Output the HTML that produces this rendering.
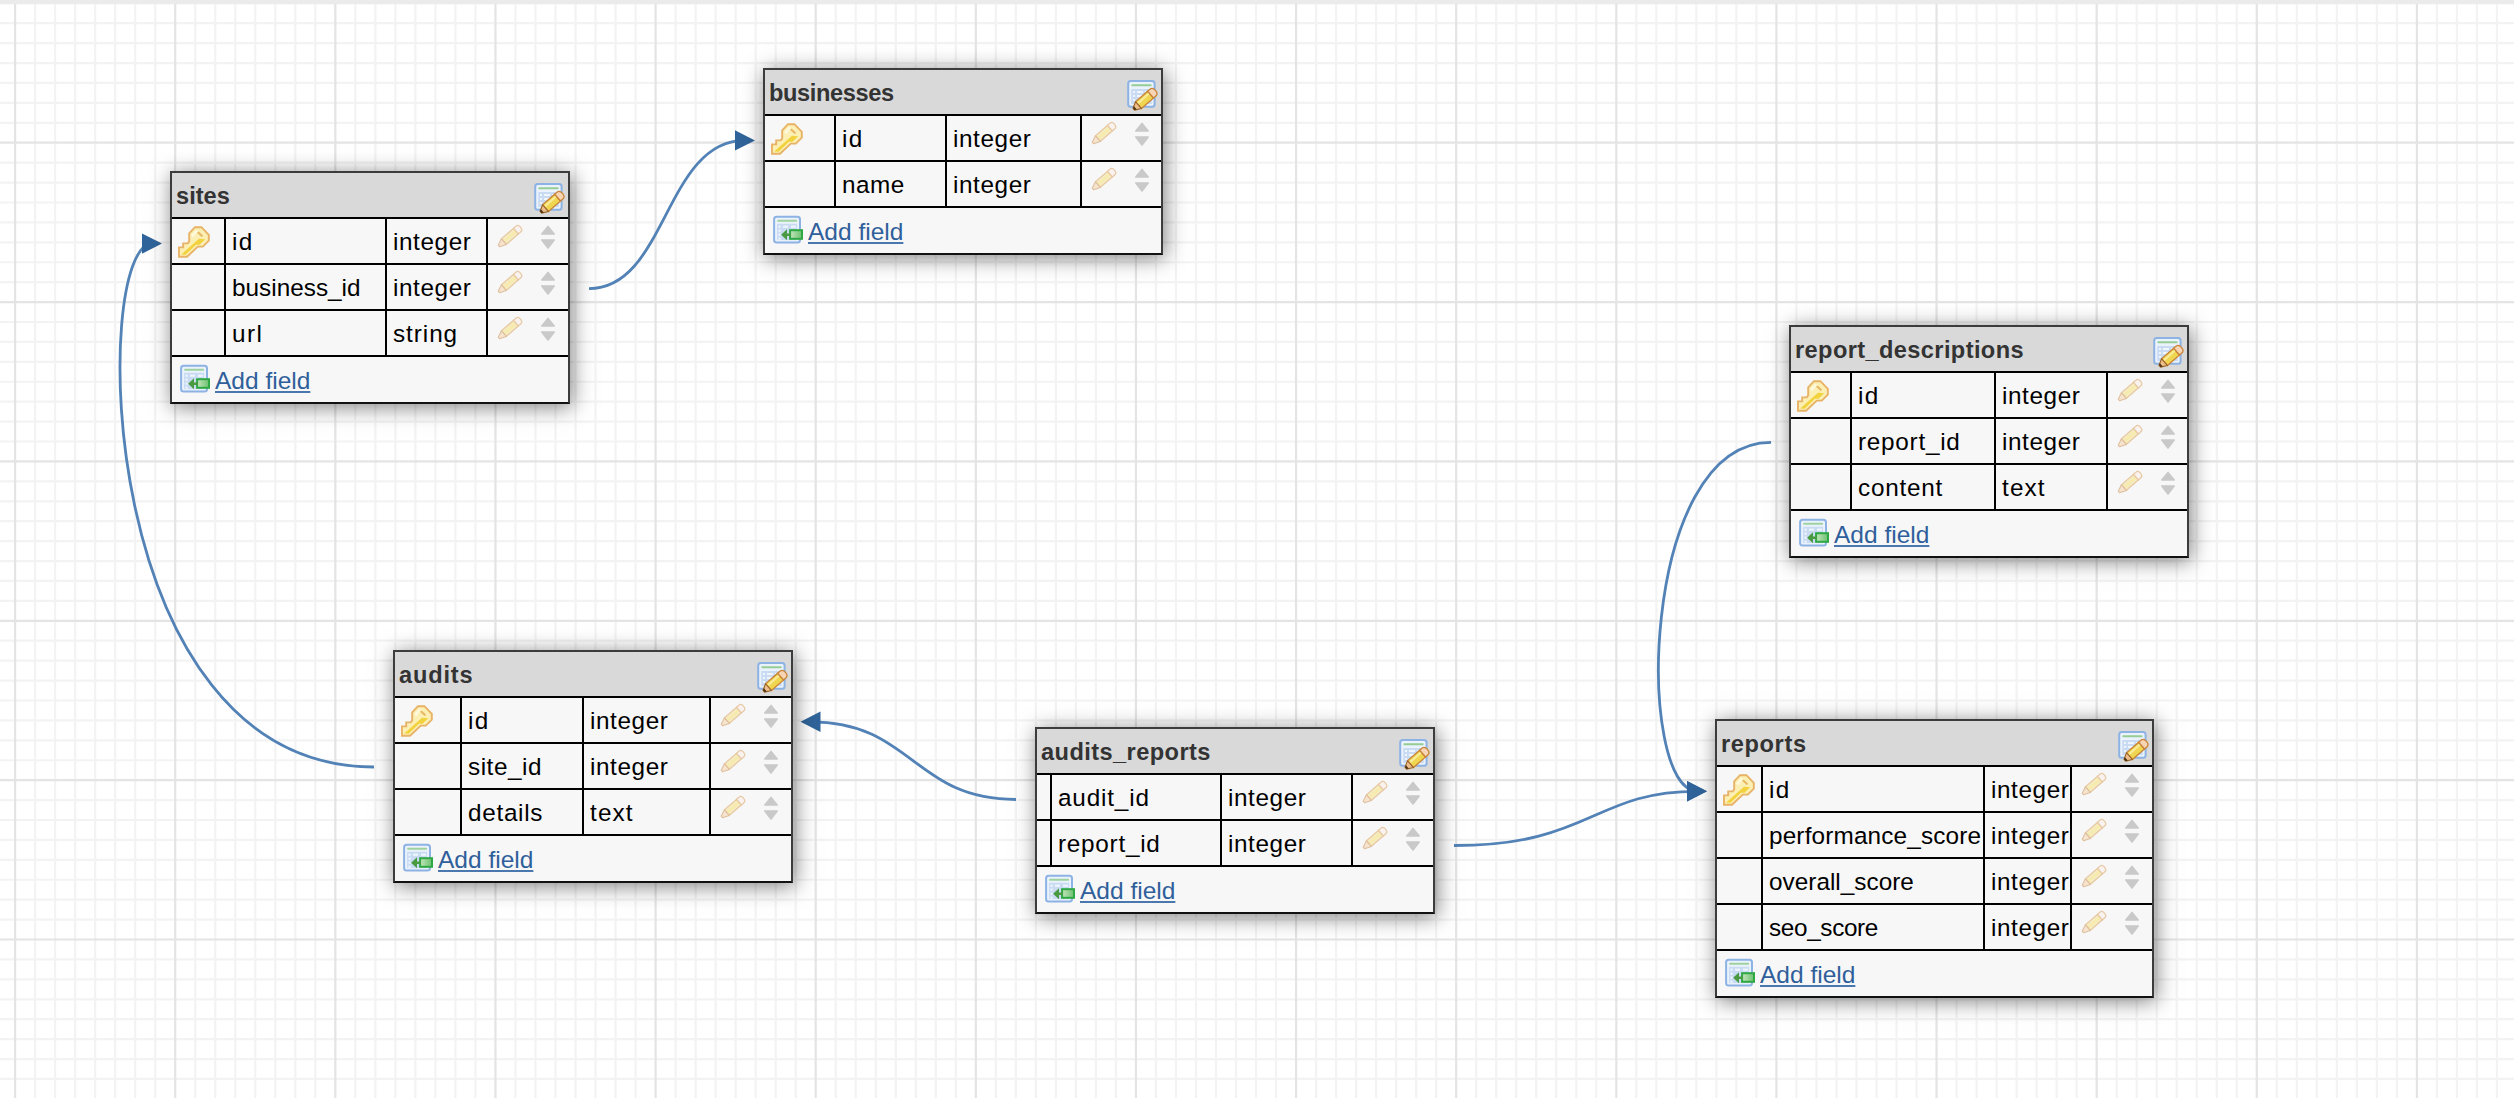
<!DOCTYPE html><html><head><meta charset="utf-8"><title>ER diagram</title><style>

html,body{margin:0;padding:0;width:2514px;height:1098px;overflow:hidden;background:#fff;font-family:"Liberation Sans", sans-serif;}
.grid,.rels{position:absolute;left:0;top:0;}
.topband{position:absolute;left:0;top:0;width:2514px;height:4px;background:#ebebeb;}
.tbl{position:absolute;box-sizing:border-box;border:2px solid #3c3c3c;border-bottom-color:#111;background:#f7f7f7;box-shadow:2px 3px 20px rgba(0,0,0,0.5);}
.hd{position:absolute;left:0;right:0;top:0;height:44px;background:#d9d9d9;border-bottom:2px solid #000;}
.title{position:absolute;left:4px;top:1px;line-height:44px;font-size:23.6px;font-weight:bold;color:#333;white-space:nowrap;}
.edit{position:absolute;right:2px;top:6px;}
.row{position:absolute;left:0;right:0;height:44px;}
.hl{position:absolute;left:0;right:0;height:2px;background:#000;}
.vl{position:absolute;width:2px;background:#000;}
.txt{position:absolute;top:1px;line-height:44px;font-size:24.3px;color:#000;white-space:nowrap;}
.key{position:absolute;left:6px;top:7px;}
.act{position:absolute;top:0;width:80px;height:44px;}
.pen{position:absolute;left:9px;top:5px;opacity:0.5;}
.ud{position:absolute;left:52px;top:5px;}
.ft{position:absolute;left:0;right:0;height:45px;}
.add{position:absolute;left:4px;top:4px;}
.link{position:absolute;left:43px;top:1px;line-height:45px;font-size:24.5px;color:#2f5f9b;text-decoration:underline;text-decoration-color:#4a78ae;text-decoration-thickness:1.5px;text-underline-offset:2px;white-space:nowrap;}

</style></head><body>
<svg class="grid" width="2514" height="1098" viewBox="0 0 2514 1098"><g stroke="#f3f3f3" stroke-width="2.2"><line x1="-4.92" y1="0" x2="-4.92" y2="1098"/><line x1="35.12" y1="0" x2="35.12" y2="1098"/><line x1="55.13" y1="0" x2="55.13" y2="1098"/><line x1="75.14" y1="0" x2="75.14" y2="1098"/><line x1="95.16" y1="0" x2="95.16" y2="1098"/><line x1="115.17" y1="0" x2="115.17" y2="1098"/><line x1="135.19" y1="0" x2="135.19" y2="1098"/><line x1="155.21" y1="0" x2="155.21" y2="1098"/><line x1="195.23" y1="0" x2="195.23" y2="1098"/><line x1="215.25" y1="0" x2="215.25" y2="1098"/><line x1="235.27" y1="0" x2="235.27" y2="1098"/><line x1="255.28" y1="0" x2="255.28" y2="1098"/><line x1="275.30" y1="0" x2="275.30" y2="1098"/><line x1="295.31" y1="0" x2="295.31" y2="1098"/><line x1="315.33" y1="0" x2="315.33" y2="1098"/><line x1="355.36" y1="0" x2="355.36" y2="1098"/><line x1="375.37" y1="0" x2="375.37" y2="1098"/><line x1="395.39" y1="0" x2="395.39" y2="1098"/><line x1="415.40" y1="0" x2="415.40" y2="1098"/><line x1="435.42" y1="0" x2="435.42" y2="1098"/><line x1="455.43" y1="0" x2="455.43" y2="1098"/><line x1="475.45" y1="0" x2="475.45" y2="1098"/><line x1="515.48" y1="0" x2="515.48" y2="1098"/><line x1="535.49" y1="0" x2="535.49" y2="1098"/><line x1="555.50" y1="0" x2="555.50" y2="1098"/><line x1="575.52" y1="0" x2="575.52" y2="1098"/><line x1="595.54" y1="0" x2="595.54" y2="1098"/><line x1="615.55" y1="0" x2="615.55" y2="1098"/><line x1="635.57" y1="0" x2="635.57" y2="1098"/><line x1="675.60" y1="0" x2="675.60" y2="1098"/><line x1="695.61" y1="0" x2="695.61" y2="1098"/><line x1="715.62" y1="0" x2="715.62" y2="1098"/><line x1="735.64" y1="0" x2="735.64" y2="1098"/><line x1="755.66" y1="0" x2="755.66" y2="1098"/><line x1="775.67" y1="0" x2="775.67" y2="1098"/><line x1="795.69" y1="0" x2="795.69" y2="1098"/><line x1="835.72" y1="0" x2="835.72" y2="1098"/><line x1="855.73" y1="0" x2="855.73" y2="1098"/><line x1="875.75" y1="0" x2="875.75" y2="1098"/><line x1="895.76" y1="0" x2="895.76" y2="1098"/><line x1="915.78" y1="0" x2="915.78" y2="1098"/><line x1="935.79" y1="0" x2="935.79" y2="1098"/><line x1="955.81" y1="0" x2="955.81" y2="1098"/><line x1="995.84" y1="0" x2="995.84" y2="1098"/><line x1="1015.85" y1="0" x2="1015.85" y2="1098"/><line x1="1035.87" y1="0" x2="1035.87" y2="1098"/><line x1="1055.88" y1="0" x2="1055.88" y2="1098"/><line x1="1075.89" y1="0" x2="1075.89" y2="1098"/><line x1="1095.91" y1="0" x2="1095.91" y2="1098"/><line x1="1115.92" y1="0" x2="1115.92" y2="1098"/><line x1="1155.95" y1="0" x2="1155.95" y2="1098"/><line x1="1175.97" y1="0" x2="1175.97" y2="1098"/><line x1="1195.98" y1="0" x2="1195.98" y2="1098"/><line x1="1216.00" y1="0" x2="1216.00" y2="1098"/><line x1="1236.01" y1="0" x2="1236.01" y2="1098"/><line x1="1256.03" y1="0" x2="1256.03" y2="1098"/><line x1="1276.04" y1="0" x2="1276.04" y2="1098"/><line x1="1316.08" y1="0" x2="1316.08" y2="1098"/><line x1="1336.09" y1="0" x2="1336.09" y2="1098"/><line x1="1356.11" y1="0" x2="1356.11" y2="1098"/><line x1="1376.12" y1="0" x2="1376.12" y2="1098"/><line x1="1396.13" y1="0" x2="1396.13" y2="1098"/><line x1="1416.15" y1="0" x2="1416.15" y2="1098"/><line x1="1436.16" y1="0" x2="1436.16" y2="1098"/><line x1="1476.19" y1="0" x2="1476.19" y2="1098"/><line x1="1496.21" y1="0" x2="1496.21" y2="1098"/><line x1="1516.22" y1="0" x2="1516.22" y2="1098"/><line x1="1536.24" y1="0" x2="1536.24" y2="1098"/><line x1="1556.25" y1="0" x2="1556.25" y2="1098"/><line x1="1576.27" y1="0" x2="1576.27" y2="1098"/><line x1="1596.28" y1="0" x2="1596.28" y2="1098"/><line x1="1636.32" y1="0" x2="1636.32" y2="1098"/><line x1="1656.33" y1="0" x2="1656.33" y2="1098"/><line x1="1676.35" y1="0" x2="1676.35" y2="1098"/><line x1="1696.36" y1="0" x2="1696.36" y2="1098"/><line x1="1716.38" y1="0" x2="1716.38" y2="1098"/><line x1="1736.39" y1="0" x2="1736.39" y2="1098"/><line x1="1756.40" y1="0" x2="1756.40" y2="1098"/><line x1="1796.43" y1="0" x2="1796.43" y2="1098"/><line x1="1816.45" y1="0" x2="1816.45" y2="1098"/><line x1="1836.46" y1="0" x2="1836.46" y2="1098"/><line x1="1856.48" y1="0" x2="1856.48" y2="1098"/><line x1="1876.49" y1="0" x2="1876.49" y2="1098"/><line x1="1896.51" y1="0" x2="1896.51" y2="1098"/><line x1="1916.52" y1="0" x2="1916.52" y2="1098"/><line x1="1956.56" y1="0" x2="1956.56" y2="1098"/><line x1="1976.57" y1="0" x2="1976.57" y2="1098"/><line x1="1996.59" y1="0" x2="1996.59" y2="1098"/><line x1="2016.60" y1="0" x2="2016.60" y2="1098"/><line x1="2036.62" y1="0" x2="2036.62" y2="1098"/><line x1="2056.63" y1="0" x2="2056.63" y2="1098"/><line x1="2076.64" y1="0" x2="2076.64" y2="1098"/><line x1="2116.68" y1="0" x2="2116.68" y2="1098"/><line x1="2136.69" y1="0" x2="2136.69" y2="1098"/><line x1="2156.70" y1="0" x2="2156.70" y2="1098"/><line x1="2176.72" y1="0" x2="2176.72" y2="1098"/><line x1="2196.74" y1="0" x2="2196.74" y2="1098"/><line x1="2216.75" y1="0" x2="2216.75" y2="1098"/><line x1="2236.76" y1="0" x2="2236.76" y2="1098"/><line x1="2276.80" y1="0" x2="2276.80" y2="1098"/><line x1="2296.81" y1="0" x2="2296.81" y2="1098"/><line x1="2316.82" y1="0" x2="2316.82" y2="1098"/><line x1="2336.84" y1="0" x2="2336.84" y2="1098"/><line x1="2356.86" y1="0" x2="2356.86" y2="1098"/><line x1="2376.87" y1="0" x2="2376.87" y2="1098"/><line x1="2396.88" y1="0" x2="2396.88" y2="1098"/><line x1="2436.91" y1="0" x2="2436.91" y2="1098"/><line x1="2456.93" y1="0" x2="2456.93" y2="1098"/><line x1="2476.95" y1="0" x2="2476.95" y2="1098"/><line x1="2496.96" y1="0" x2="2496.96" y2="1098"/><line x1="0" y1="3.28" x2="2514" y2="3.28"/><line x1="0" y1="23.20" x2="2514" y2="23.20"/><line x1="0" y1="43.12" x2="2514" y2="43.12"/><line x1="0" y1="63.04" x2="2514" y2="63.04"/><line x1="0" y1="82.96" x2="2514" y2="82.96"/><line x1="0" y1="102.88" x2="2514" y2="102.88"/><line x1="0" y1="122.80" x2="2514" y2="122.80"/><line x1="0" y1="162.64" x2="2514" y2="162.64"/><line x1="0" y1="182.56" x2="2514" y2="182.56"/><line x1="0" y1="202.48" x2="2514" y2="202.48"/><line x1="0" y1="222.40" x2="2514" y2="222.40"/><line x1="0" y1="242.32" x2="2514" y2="242.32"/><line x1="0" y1="262.24" x2="2514" y2="262.24"/><line x1="0" y1="282.16" x2="2514" y2="282.16"/><line x1="0" y1="322.00" x2="2514" y2="322.00"/><line x1="0" y1="341.92" x2="2514" y2="341.92"/><line x1="0" y1="361.84" x2="2514" y2="361.84"/><line x1="0" y1="381.76" x2="2514" y2="381.76"/><line x1="0" y1="401.68" x2="2514" y2="401.68"/><line x1="0" y1="421.60" x2="2514" y2="421.60"/><line x1="0" y1="441.52" x2="2514" y2="441.52"/><line x1="0" y1="481.36" x2="2514" y2="481.36"/><line x1="0" y1="501.28" x2="2514" y2="501.28"/><line x1="0" y1="521.20" x2="2514" y2="521.20"/><line x1="0" y1="541.12" x2="2514" y2="541.12"/><line x1="0" y1="561.04" x2="2514" y2="561.04"/><line x1="0" y1="580.96" x2="2514" y2="580.96"/><line x1="0" y1="600.88" x2="2514" y2="600.88"/><line x1="0" y1="640.72" x2="2514" y2="640.72"/><line x1="0" y1="660.64" x2="2514" y2="660.64"/><line x1="0" y1="680.56" x2="2514" y2="680.56"/><line x1="0" y1="700.48" x2="2514" y2="700.48"/><line x1="0" y1="720.40" x2="2514" y2="720.40"/><line x1="0" y1="740.32" x2="2514" y2="740.32"/><line x1="0" y1="760.24" x2="2514" y2="760.24"/><line x1="0" y1="800.08" x2="2514" y2="800.08"/><line x1="0" y1="820.00" x2="2514" y2="820.00"/><line x1="0" y1="839.92" x2="2514" y2="839.92"/><line x1="0" y1="859.84" x2="2514" y2="859.84"/><line x1="0" y1="879.76" x2="2514" y2="879.76"/><line x1="0" y1="899.68" x2="2514" y2="899.68"/><line x1="0" y1="919.60" x2="2514" y2="919.60"/><line x1="0" y1="959.44" x2="2514" y2="959.44"/><line x1="0" y1="979.36" x2="2514" y2="979.36"/><line x1="0" y1="999.28" x2="2514" y2="999.28"/><line x1="0" y1="1019.20" x2="2514" y2="1019.20"/><line x1="0" y1="1039.12" x2="2514" y2="1039.12"/><line x1="0" y1="1059.04" x2="2514" y2="1059.04"/><line x1="0" y1="1078.96" x2="2514" y2="1078.96"/></g><g stroke="#e4e4e4" stroke-width="2.2"><line x1="15.10" y1="0" x2="15.10" y2="1098"/><line x1="175.22" y1="0" x2="175.22" y2="1098"/><line x1="335.34" y1="0" x2="335.34" y2="1098"/><line x1="495.46" y1="0" x2="495.46" y2="1098"/><line x1="655.58" y1="0" x2="655.58" y2="1098"/><line x1="815.70" y1="0" x2="815.70" y2="1098"/><line x1="975.82" y1="0" x2="975.82" y2="1098"/><line x1="1135.94" y1="0" x2="1135.94" y2="1098"/><line x1="1296.06" y1="0" x2="1296.06" y2="1098"/><line x1="1456.18" y1="0" x2="1456.18" y2="1098"/><line x1="1616.30" y1="0" x2="1616.30" y2="1098"/><line x1="1776.42" y1="0" x2="1776.42" y2="1098"/><line x1="1936.54" y1="0" x2="1936.54" y2="1098"/><line x1="2096.66" y1="0" x2="2096.66" y2="1098"/><line x1="2256.78" y1="0" x2="2256.78" y2="1098"/><line x1="2416.90" y1="0" x2="2416.90" y2="1098"/><line x1="0" y1="-16.64" x2="2514" y2="-16.64"/><line x1="0" y1="142.72" x2="2514" y2="142.72"/><line x1="0" y1="302.08" x2="2514" y2="302.08"/><line x1="0" y1="461.44" x2="2514" y2="461.44"/><line x1="0" y1="620.80" x2="2514" y2="620.80"/><line x1="0" y1="780.16" x2="2514" y2="780.16"/><line x1="0" y1="939.52" x2="2514" y2="939.52"/></g></svg>
<div class="topband"></div>
<svg class="rels" width="2514" height="1098" viewBox="0 0 2514 1098"><path d="M589 288.6 C666.8 288.6 664.7 140.4 745 140.4" fill="none" stroke="#5282b6" stroke-width="2.8"/><path d="M755 140.4 L735 130.20000000000002 L735 150.6 Z" fill="#30649a"/><path d="M374 767 C91.8 767 91.8 243.6 152 243.6" fill="none" stroke="#5282b6" stroke-width="2.8"/><path d="M162 243.6 L142 233.4 L142 253.79999999999998 Z" fill="#30649a"/><path d="M1016 799.5 C913 799.5 913 721.8 810.5 721.8" fill="none" stroke="#5282b6" stroke-width="2.8"/><path d="M800.5 721.8 L820.5 711.5999999999999 L820.5 732.0 Z" fill="#30649a"/><path d="M1454 845.5 C1591 845.5 1593.6 791.3 1697 791.3" fill="none" stroke="#5282b6" stroke-width="2.8"/><path d="M1707 791.3 L1687 781.0999999999999 L1687 801.5 Z" fill="#30649a"/><path d="M1771 442.3 C1638.5 442.3 1636 791 1697 791" fill="none" stroke="#5282b6" stroke-width="2.8"/><path d="M1707 791.3 L1687 781.0999999999999 L1687 801.5 Z" fill="#30649a"/></svg>
<div class="tbl" style="left:763px;top:68px;width:400px;height:187px">
<div class="hd"><span class="title" style="letter-spacing:-0.38px">businesses</span><svg class="edit" width="36" height="38" viewBox="0 0 36 38"><rect x="5.2" y="5.1" width="26.4" height="25.7" rx="2.5" fill="#eaf2fc" stroke="#8db2e4" stroke-width="2"/><rect x="8.3" y="8.2" width="20.4" height="2" rx="1" fill="#96cd94"/><rect x="8.3" y="13" width="20.4" height="15" fill="#c8dbf3"/><g fill="#eef5fd"><rect x="10" y="15" width="2" height="2"/><rect x="10" y="19" width="2" height="2"/><rect x="10" y="23" width="2" height="2"/><rect x="14" y="15" width="6" height="2"/><rect x="14" y="19" width="6" height="2"/><rect x="22" y="15" width="5" height="2"/></g><g transform="translate(10.6 33.4) rotate(-41)"><path d="M6.5 -4.5 L22.5 -4.5 L22.5 4.5 L6.5 4.5 Z" fill="#f0d650" stroke="#c98438" stroke-width="1.3"/><path d="M7.5 -2.8 L22 -2.8 L22 -0.8 L7.5 -0.8 Z" fill="#f8ec9c"/><path d="M22.5 -4.5 L25.5 -4.5 Q29 -4.5 29 0 Q29 4.5 25.5 4.5 L22.5 4.5 Z" fill="#f6d4b4" stroke="#c98438" stroke-width="1.3"/><path d="M6.5 -4.5 L0.3 -1.2 L0.3 1.2 L6.5 4.5 Z" fill="#ecbe8c" stroke="#9a6428" stroke-width="1.1" stroke-linejoin="round"/><path d="M0.3 -1.2 L2.3 -2.2 L2.3 2.2 L0.3 1.2 Z" fill="#4a3010"/></g></svg></div>
<div class="row" style="top:46px">
<svg class="key" width="32" height="32" viewBox="0 0 16 16"><path d="M0.5 10.7 L2.6 10.7 L2.6 8.7 L4.9 8.7 L5.6 7.7 L5.6 3.7 L8.5 0.6 L11.7 0.6 L15.4 4.4 L15.4 7.3 L12.4 10.3 L9.9 10.3 L4.5 15.4 L0.5 15.4 Z" fill="#fbefb4" stroke="#e8b366" stroke-width="0.95" stroke-linejoin="miter"/><path d="M1.6 14.2 L10.5 6.4 L13.6 6.6 L10.8 9.4 L9 9.4 L3.8 14.4 Z" fill="#f2d23e"/><path d="M6.6 4.6 L8.9 2 L10.2 2.2 L7.6 5.8 Z" fill="#fffbe6" opacity="0.8"/><path d="M10.2 3.4 L11.9 4.9" stroke="#e8b868" stroke-width="1.1" stroke-linecap="round"/></svg>
<span class="txt" style="left:77px;letter-spacing:1.4px">id</span>
<span class="txt" style="left:188px;letter-spacing:0.6px">integer</span>
<span class="act" style="left:317px"><svg class="pen" width="28" height="28" viewBox="0 0 28 28"><g transform="translate(1.6 22.2) rotate(-41)"><path d="M7 -3.7 L23 -3.7 L23 3.7 L7 3.7 Z" fill="#f4e08a" stroke="#d89a50" stroke-width="1.2"/><path d="M8 -0.9 L22 -0.9 L22 1.2 L8 1.2 Z" fill="#f7e060"/><path d="M23 -3.7 L26.3 -3.7 Q29 -3.7 29 0 Q29 3.7 26.3 3.7 L23 3.7 Z" fill="#fdeee6" stroke="#d89a50" stroke-width="1.2"/><path d="M7 -3.7 L0.4 -1 L0.4 1 L7 3.7 Z" fill="#f6d2a8" stroke="#c88a48" stroke-width="1.1" stroke-linejoin="round"/></g></svg><svg class="ud" width="16" height="26" viewBox="0 0 16 26"><path d="M8 2.4 L14.2 10 L1.8 10 Z" fill="#c9c9c9" stroke="#c9c9c9" stroke-width="1.6" stroke-linejoin="round"/><path d="M1.8 16 L14.2 16 L8 24 Z" fill="#c9c9c9" stroke="#c9c9c9" stroke-width="1.6" stroke-linejoin="round"/></svg></span>
</div>
<div class="hl" style="top:90px"></div>
<div class="row" style="top:92px">
<span class="txt" style="left:77px;letter-spacing:0.47px">name</span>
<span class="txt" style="left:188px;letter-spacing:0.6px">integer</span>
<span class="act" style="left:317px"><svg class="pen" width="28" height="28" viewBox="0 0 28 28"><g transform="translate(1.6 22.2) rotate(-41)"><path d="M7 -3.7 L23 -3.7 L23 3.7 L7 3.7 Z" fill="#f4e08a" stroke="#d89a50" stroke-width="1.2"/><path d="M8 -0.9 L22 -0.9 L22 1.2 L8 1.2 Z" fill="#f7e060"/><path d="M23 -3.7 L26.3 -3.7 Q29 -3.7 29 0 Q29 3.7 26.3 3.7 L23 3.7 Z" fill="#fdeee6" stroke="#d89a50" stroke-width="1.2"/><path d="M7 -3.7 L0.4 -1 L0.4 1 L7 3.7 Z" fill="#f6d2a8" stroke="#c88a48" stroke-width="1.1" stroke-linejoin="round"/></g></svg><svg class="ud" width="16" height="26" viewBox="0 0 16 26"><path d="M8 2.4 L14.2 10 L1.8 10 Z" fill="#c9c9c9" stroke="#c9c9c9" stroke-width="1.6" stroke-linejoin="round"/><path d="M1.8 16 L14.2 16 L8 24 Z" fill="#c9c9c9" stroke="#c9c9c9" stroke-width="1.6" stroke-linejoin="round"/></svg></span>
</div>
<div class="hl" style="top:136px"></div>
<div class="vl" style="left:69px;top:46px;height:92px"></div>
<div class="vl" style="left:180px;top:46px;height:92px"></div>
<div class="vl" style="left:315px;top:46px;height:92px"></div>
<div class="ft" style="top:138px"><svg class="add" width="36" height="36" viewBox="0 0 36 36"><rect x="5.1" y="4.7" width="25.9" height="25.7" rx="2.5" fill="#eaf2fc" stroke="#8db2e4" stroke-width="2"/><rect x="8.1" y="7.7" width="20" height="2" rx="1" fill="#9fd29e"/><rect x="8.1" y="11.8" width="20" height="16.3" fill="#c8dbf3"/><g fill="#eef5fd"><rect x="9.5" y="13.6" width="2.2" height="2.2"/><rect x="9.5" y="17.6" width="2.2" height="2.2"/><rect x="9.5" y="21.6" width="2.2" height="2.2"/><rect x="9.5" y="25.6" width="2.2" height="2.2"/><rect x="14" y="13.6" width="5" height="2.2"/><rect x="22" y="13.6" width="5" height="2.2"/></g><defs><linearGradient id="ag" x1="0" y1="0" x2="1" y2="0"><stop offset="0" stop-color="#c4e6bc"/><stop offset="1" stop-color="#6cc070"/></linearGradient></defs><rect x="21.1" y="18.2" width="11.9" height="8.6" fill="url(#ag)" stroke="#2ea843" stroke-width="2"/><path d="M12.1 22.7 L18 17.2 L18 21.4 L22 21.4 L22 24.1 L18 24.1 L18 28.2 Z" fill="#4a9a42"/></svg><span class="link">Add field</span></div>
</div>
<div class="tbl" style="left:170px;top:171px;width:400px;height:233px">
<div class="hd"><span class="title" style="letter-spacing:0.02px">sites</span><svg class="edit" width="36" height="38" viewBox="0 0 36 38"><rect x="5.2" y="5.1" width="26.4" height="25.7" rx="2.5" fill="#eaf2fc" stroke="#8db2e4" stroke-width="2"/><rect x="8.3" y="8.2" width="20.4" height="2" rx="1" fill="#96cd94"/><rect x="8.3" y="13" width="20.4" height="15" fill="#c8dbf3"/><g fill="#eef5fd"><rect x="10" y="15" width="2" height="2"/><rect x="10" y="19" width="2" height="2"/><rect x="10" y="23" width="2" height="2"/><rect x="14" y="15" width="6" height="2"/><rect x="14" y="19" width="6" height="2"/><rect x="22" y="15" width="5" height="2"/></g><g transform="translate(10.6 33.4) rotate(-41)"><path d="M6.5 -4.5 L22.5 -4.5 L22.5 4.5 L6.5 4.5 Z" fill="#f0d650" stroke="#c98438" stroke-width="1.3"/><path d="M7.5 -2.8 L22 -2.8 L22 -0.8 L7.5 -0.8 Z" fill="#f8ec9c"/><path d="M22.5 -4.5 L25.5 -4.5 Q29 -4.5 29 0 Q29 4.5 25.5 4.5 L22.5 4.5 Z" fill="#f6d4b4" stroke="#c98438" stroke-width="1.3"/><path d="M6.5 -4.5 L0.3 -1.2 L0.3 1.2 L6.5 4.5 Z" fill="#ecbe8c" stroke="#9a6428" stroke-width="1.1" stroke-linejoin="round"/><path d="M0.3 -1.2 L2.3 -2.2 L2.3 2.2 L0.3 1.2 Z" fill="#4a3010"/></g></svg></div>
<div class="row" style="top:46px">
<svg class="key" width="32" height="32" viewBox="0 0 16 16"><path d="M0.5 10.7 L2.6 10.7 L2.6 8.7 L4.9 8.7 L5.6 7.7 L5.6 3.7 L8.5 0.6 L11.7 0.6 L15.4 4.4 L15.4 7.3 L12.4 10.3 L9.9 10.3 L4.5 15.4 L0.5 15.4 Z" fill="#fbefb4" stroke="#e8b366" stroke-width="0.95" stroke-linejoin="miter"/><path d="M1.6 14.2 L10.5 6.4 L13.6 6.6 L10.8 9.4 L9 9.4 L3.8 14.4 Z" fill="#f2d23e"/><path d="M6.6 4.6 L8.9 2 L10.2 2.2 L7.6 5.8 Z" fill="#fffbe6" opacity="0.8"/><path d="M10.2 3.4 L11.9 4.9" stroke="#e8b868" stroke-width="1.1" stroke-linecap="round"/></svg>
<span class="txt" style="left:60px;letter-spacing:1.4px">id</span>
<span class="txt" style="left:221px;letter-spacing:0.6px">integer</span>
<span class="act" style="left:316px"><svg class="pen" width="28" height="28" viewBox="0 0 28 28"><g transform="translate(1.6 22.2) rotate(-41)"><path d="M7 -3.7 L23 -3.7 L23 3.7 L7 3.7 Z" fill="#f4e08a" stroke="#d89a50" stroke-width="1.2"/><path d="M8 -0.9 L22 -0.9 L22 1.2 L8 1.2 Z" fill="#f7e060"/><path d="M23 -3.7 L26.3 -3.7 Q29 -3.7 29 0 Q29 3.7 26.3 3.7 L23 3.7 Z" fill="#fdeee6" stroke="#d89a50" stroke-width="1.2"/><path d="M7 -3.7 L0.4 -1 L0.4 1 L7 3.7 Z" fill="#f6d2a8" stroke="#c88a48" stroke-width="1.1" stroke-linejoin="round"/></g></svg><svg class="ud" width="16" height="26" viewBox="0 0 16 26"><path d="M8 2.4 L14.2 10 L1.8 10 Z" fill="#c9c9c9" stroke="#c9c9c9" stroke-width="1.6" stroke-linejoin="round"/><path d="M1.8 16 L14.2 16 L8 24 Z" fill="#c9c9c9" stroke="#c9c9c9" stroke-width="1.6" stroke-linejoin="round"/></svg></span>
</div>
<div class="hl" style="top:90px"></div>
<div class="row" style="top:92px">
<span class="txt" style="left:60px;letter-spacing:0.02px">business_id</span>
<span class="txt" style="left:221px;letter-spacing:0.6px">integer</span>
<span class="act" style="left:316px"><svg class="pen" width="28" height="28" viewBox="0 0 28 28"><g transform="translate(1.6 22.2) rotate(-41)"><path d="M7 -3.7 L23 -3.7 L23 3.7 L7 3.7 Z" fill="#f4e08a" stroke="#d89a50" stroke-width="1.2"/><path d="M8 -0.9 L22 -0.9 L22 1.2 L8 1.2 Z" fill="#f7e060"/><path d="M23 -3.7 L26.3 -3.7 Q29 -3.7 29 0 Q29 3.7 26.3 3.7 L23 3.7 Z" fill="#fdeee6" stroke="#d89a50" stroke-width="1.2"/><path d="M7 -3.7 L0.4 -1 L0.4 1 L7 3.7 Z" fill="#f6d2a8" stroke="#c88a48" stroke-width="1.1" stroke-linejoin="round"/></g></svg><svg class="ud" width="16" height="26" viewBox="0 0 16 26"><path d="M8 2.4 L14.2 10 L1.8 10 Z" fill="#c9c9c9" stroke="#c9c9c9" stroke-width="1.6" stroke-linejoin="round"/><path d="M1.8 16 L14.2 16 L8 24 Z" fill="#c9c9c9" stroke="#c9c9c9" stroke-width="1.6" stroke-linejoin="round"/></svg></span>
</div>
<div class="hl" style="top:136px"></div>
<div class="row" style="top:138px">
<span class="txt" style="left:60px;letter-spacing:1.45px">url</span>
<span class="txt" style="left:221px;letter-spacing:0.94px">string</span>
<span class="act" style="left:316px"><svg class="pen" width="28" height="28" viewBox="0 0 28 28"><g transform="translate(1.6 22.2) rotate(-41)"><path d="M7 -3.7 L23 -3.7 L23 3.7 L7 3.7 Z" fill="#f4e08a" stroke="#d89a50" stroke-width="1.2"/><path d="M8 -0.9 L22 -0.9 L22 1.2 L8 1.2 Z" fill="#f7e060"/><path d="M23 -3.7 L26.3 -3.7 Q29 -3.7 29 0 Q29 3.7 26.3 3.7 L23 3.7 Z" fill="#fdeee6" stroke="#d89a50" stroke-width="1.2"/><path d="M7 -3.7 L0.4 -1 L0.4 1 L7 3.7 Z" fill="#f6d2a8" stroke="#c88a48" stroke-width="1.1" stroke-linejoin="round"/></g></svg><svg class="ud" width="16" height="26" viewBox="0 0 16 26"><path d="M8 2.4 L14.2 10 L1.8 10 Z" fill="#c9c9c9" stroke="#c9c9c9" stroke-width="1.6" stroke-linejoin="round"/><path d="M1.8 16 L14.2 16 L8 24 Z" fill="#c9c9c9" stroke="#c9c9c9" stroke-width="1.6" stroke-linejoin="round"/></svg></span>
</div>
<div class="hl" style="top:182px"></div>
<div class="vl" style="left:52px;top:46px;height:138px"></div>
<div class="vl" style="left:213px;top:46px;height:138px"></div>
<div class="vl" style="left:314px;top:46px;height:138px"></div>
<div class="ft" style="top:184px"><svg class="add" width="36" height="36" viewBox="0 0 36 36"><rect x="5.1" y="4.7" width="25.9" height="25.7" rx="2.5" fill="#eaf2fc" stroke="#8db2e4" stroke-width="2"/><rect x="8.1" y="7.7" width="20" height="2" rx="1" fill="#9fd29e"/><rect x="8.1" y="11.8" width="20" height="16.3" fill="#c8dbf3"/><g fill="#eef5fd"><rect x="9.5" y="13.6" width="2.2" height="2.2"/><rect x="9.5" y="17.6" width="2.2" height="2.2"/><rect x="9.5" y="21.6" width="2.2" height="2.2"/><rect x="9.5" y="25.6" width="2.2" height="2.2"/><rect x="14" y="13.6" width="5" height="2.2"/><rect x="22" y="13.6" width="5" height="2.2"/></g><defs><linearGradient id="ag" x1="0" y1="0" x2="1" y2="0"><stop offset="0" stop-color="#c4e6bc"/><stop offset="1" stop-color="#6cc070"/></linearGradient></defs><rect x="21.1" y="18.2" width="11.9" height="8.6" fill="url(#ag)" stroke="#2ea843" stroke-width="2"/><path d="M12.1 22.7 L18 17.2 L18 21.4 L22 21.4 L22 24.1 L18 24.1 L18 28.2 Z" fill="#4a9a42"/></svg><span class="link">Add field</span></div>
</div>
<div class="tbl" style="left:1789px;top:325px;width:400px;height:233px">
<div class="hd"><span class="title" style="letter-spacing:0.39px">report_descriptions</span><svg class="edit" width="36" height="38" viewBox="0 0 36 38"><rect x="5.2" y="5.1" width="26.4" height="25.7" rx="2.5" fill="#eaf2fc" stroke="#8db2e4" stroke-width="2"/><rect x="8.3" y="8.2" width="20.4" height="2" rx="1" fill="#96cd94"/><rect x="8.3" y="13" width="20.4" height="15" fill="#c8dbf3"/><g fill="#eef5fd"><rect x="10" y="15" width="2" height="2"/><rect x="10" y="19" width="2" height="2"/><rect x="10" y="23" width="2" height="2"/><rect x="14" y="15" width="6" height="2"/><rect x="14" y="19" width="6" height="2"/><rect x="22" y="15" width="5" height="2"/></g><g transform="translate(10.6 33.4) rotate(-41)"><path d="M6.5 -4.5 L22.5 -4.5 L22.5 4.5 L6.5 4.5 Z" fill="#f0d650" stroke="#c98438" stroke-width="1.3"/><path d="M7.5 -2.8 L22 -2.8 L22 -0.8 L7.5 -0.8 Z" fill="#f8ec9c"/><path d="M22.5 -4.5 L25.5 -4.5 Q29 -4.5 29 0 Q29 4.5 25.5 4.5 L22.5 4.5 Z" fill="#f6d4b4" stroke="#c98438" stroke-width="1.3"/><path d="M6.5 -4.5 L0.3 -1.2 L0.3 1.2 L6.5 4.5 Z" fill="#ecbe8c" stroke="#9a6428" stroke-width="1.1" stroke-linejoin="round"/><path d="M0.3 -1.2 L2.3 -2.2 L2.3 2.2 L0.3 1.2 Z" fill="#4a3010"/></g></svg></div>
<div class="row" style="top:46px">
<svg class="key" width="32" height="32" viewBox="0 0 16 16"><path d="M0.5 10.7 L2.6 10.7 L2.6 8.7 L4.9 8.7 L5.6 7.7 L5.6 3.7 L8.5 0.6 L11.7 0.6 L15.4 4.4 L15.4 7.3 L12.4 10.3 L9.9 10.3 L4.5 15.4 L0.5 15.4 Z" fill="#fbefb4" stroke="#e8b366" stroke-width="0.95" stroke-linejoin="miter"/><path d="M1.6 14.2 L10.5 6.4 L13.6 6.6 L10.8 9.4 L9 9.4 L3.8 14.4 Z" fill="#f2d23e"/><path d="M6.6 4.6 L8.9 2 L10.2 2.2 L7.6 5.8 Z" fill="#fffbe6" opacity="0.8"/><path d="M10.2 3.4 L11.9 4.9" stroke="#e8b868" stroke-width="1.1" stroke-linecap="round"/></svg>
<span class="txt" style="left:67px;letter-spacing:1.4px">id</span>
<span class="txt" style="left:211px;letter-spacing:0.6px">integer</span>
<span class="act" style="left:317px"><svg class="pen" width="28" height="28" viewBox="0 0 28 28"><g transform="translate(1.6 22.2) rotate(-41)"><path d="M7 -3.7 L23 -3.7 L23 3.7 L7 3.7 Z" fill="#f4e08a" stroke="#d89a50" stroke-width="1.2"/><path d="M8 -0.9 L22 -0.9 L22 1.2 L8 1.2 Z" fill="#f7e060"/><path d="M23 -3.7 L26.3 -3.7 Q29 -3.7 29 0 Q29 3.7 26.3 3.7 L23 3.7 Z" fill="#fdeee6" stroke="#d89a50" stroke-width="1.2"/><path d="M7 -3.7 L0.4 -1 L0.4 1 L7 3.7 Z" fill="#f6d2a8" stroke="#c88a48" stroke-width="1.1" stroke-linejoin="round"/></g></svg><svg class="ud" width="16" height="26" viewBox="0 0 16 26"><path d="M8 2.4 L14.2 10 L1.8 10 Z" fill="#c9c9c9" stroke="#c9c9c9" stroke-width="1.6" stroke-linejoin="round"/><path d="M1.8 16 L14.2 16 L8 24 Z" fill="#c9c9c9" stroke="#c9c9c9" stroke-width="1.6" stroke-linejoin="round"/></svg></span>
</div>
<div class="hl" style="top:90px"></div>
<div class="row" style="top:92px">
<span class="txt" style="left:67px;letter-spacing:0.74px">report_id</span>
<span class="txt" style="left:211px;letter-spacing:0.6px">integer</span>
<span class="act" style="left:317px"><svg class="pen" width="28" height="28" viewBox="0 0 28 28"><g transform="translate(1.6 22.2) rotate(-41)"><path d="M7 -3.7 L23 -3.7 L23 3.7 L7 3.7 Z" fill="#f4e08a" stroke="#d89a50" stroke-width="1.2"/><path d="M8 -0.9 L22 -0.9 L22 1.2 L8 1.2 Z" fill="#f7e060"/><path d="M23 -3.7 L26.3 -3.7 Q29 -3.7 29 0 Q29 3.7 26.3 3.7 L23 3.7 Z" fill="#fdeee6" stroke="#d89a50" stroke-width="1.2"/><path d="M7 -3.7 L0.4 -1 L0.4 1 L7 3.7 Z" fill="#f6d2a8" stroke="#c88a48" stroke-width="1.1" stroke-linejoin="round"/></g></svg><svg class="ud" width="16" height="26" viewBox="0 0 16 26"><path d="M8 2.4 L14.2 10 L1.8 10 Z" fill="#c9c9c9" stroke="#c9c9c9" stroke-width="1.6" stroke-linejoin="round"/><path d="M1.8 16 L14.2 16 L8 24 Z" fill="#c9c9c9" stroke="#c9c9c9" stroke-width="1.6" stroke-linejoin="round"/></svg></span>
</div>
<div class="hl" style="top:136px"></div>
<div class="row" style="top:138px">
<span class="txt" style="left:67px;letter-spacing:0.77px">content</span>
<span class="txt" style="left:211px;letter-spacing:1.13px">text</span>
<span class="act" style="left:317px"><svg class="pen" width="28" height="28" viewBox="0 0 28 28"><g transform="translate(1.6 22.2) rotate(-41)"><path d="M7 -3.7 L23 -3.7 L23 3.7 L7 3.7 Z" fill="#f4e08a" stroke="#d89a50" stroke-width="1.2"/><path d="M8 -0.9 L22 -0.9 L22 1.2 L8 1.2 Z" fill="#f7e060"/><path d="M23 -3.7 L26.3 -3.7 Q29 -3.7 29 0 Q29 3.7 26.3 3.7 L23 3.7 Z" fill="#fdeee6" stroke="#d89a50" stroke-width="1.2"/><path d="M7 -3.7 L0.4 -1 L0.4 1 L7 3.7 Z" fill="#f6d2a8" stroke="#c88a48" stroke-width="1.1" stroke-linejoin="round"/></g></svg><svg class="ud" width="16" height="26" viewBox="0 0 16 26"><path d="M8 2.4 L14.2 10 L1.8 10 Z" fill="#c9c9c9" stroke="#c9c9c9" stroke-width="1.6" stroke-linejoin="round"/><path d="M1.8 16 L14.2 16 L8 24 Z" fill="#c9c9c9" stroke="#c9c9c9" stroke-width="1.6" stroke-linejoin="round"/></svg></span>
</div>
<div class="hl" style="top:182px"></div>
<div class="vl" style="left:59px;top:46px;height:138px"></div>
<div class="vl" style="left:203px;top:46px;height:138px"></div>
<div class="vl" style="left:315px;top:46px;height:138px"></div>
<div class="ft" style="top:184px"><svg class="add" width="36" height="36" viewBox="0 0 36 36"><rect x="5.1" y="4.7" width="25.9" height="25.7" rx="2.5" fill="#eaf2fc" stroke="#8db2e4" stroke-width="2"/><rect x="8.1" y="7.7" width="20" height="2" rx="1" fill="#9fd29e"/><rect x="8.1" y="11.8" width="20" height="16.3" fill="#c8dbf3"/><g fill="#eef5fd"><rect x="9.5" y="13.6" width="2.2" height="2.2"/><rect x="9.5" y="17.6" width="2.2" height="2.2"/><rect x="9.5" y="21.6" width="2.2" height="2.2"/><rect x="9.5" y="25.6" width="2.2" height="2.2"/><rect x="14" y="13.6" width="5" height="2.2"/><rect x="22" y="13.6" width="5" height="2.2"/></g><defs><linearGradient id="ag" x1="0" y1="0" x2="1" y2="0"><stop offset="0" stop-color="#c4e6bc"/><stop offset="1" stop-color="#6cc070"/></linearGradient></defs><rect x="21.1" y="18.2" width="11.9" height="8.6" fill="url(#ag)" stroke="#2ea843" stroke-width="2"/><path d="M12.1 22.7 L18 17.2 L18 21.4 L22 21.4 L22 24.1 L18 24.1 L18 28.2 Z" fill="#4a9a42"/></svg><span class="link">Add field</span></div>
</div>
<div class="tbl" style="left:393px;top:650px;width:400px;height:233px">
<div class="hd"><span class="title" style="letter-spacing:0.84px">audits</span><svg class="edit" width="36" height="38" viewBox="0 0 36 38"><rect x="5.2" y="5.1" width="26.4" height="25.7" rx="2.5" fill="#eaf2fc" stroke="#8db2e4" stroke-width="2"/><rect x="8.3" y="8.2" width="20.4" height="2" rx="1" fill="#96cd94"/><rect x="8.3" y="13" width="20.4" height="15" fill="#c8dbf3"/><g fill="#eef5fd"><rect x="10" y="15" width="2" height="2"/><rect x="10" y="19" width="2" height="2"/><rect x="10" y="23" width="2" height="2"/><rect x="14" y="15" width="6" height="2"/><rect x="14" y="19" width="6" height="2"/><rect x="22" y="15" width="5" height="2"/></g><g transform="translate(10.6 33.4) rotate(-41)"><path d="M6.5 -4.5 L22.5 -4.5 L22.5 4.5 L6.5 4.5 Z" fill="#f0d650" stroke="#c98438" stroke-width="1.3"/><path d="M7.5 -2.8 L22 -2.8 L22 -0.8 L7.5 -0.8 Z" fill="#f8ec9c"/><path d="M22.5 -4.5 L25.5 -4.5 Q29 -4.5 29 0 Q29 4.5 25.5 4.5 L22.5 4.5 Z" fill="#f6d4b4" stroke="#c98438" stroke-width="1.3"/><path d="M6.5 -4.5 L0.3 -1.2 L0.3 1.2 L6.5 4.5 Z" fill="#ecbe8c" stroke="#9a6428" stroke-width="1.1" stroke-linejoin="round"/><path d="M0.3 -1.2 L2.3 -2.2 L2.3 2.2 L0.3 1.2 Z" fill="#4a3010"/></g></svg></div>
<div class="row" style="top:46px">
<svg class="key" width="32" height="32" viewBox="0 0 16 16"><path d="M0.5 10.7 L2.6 10.7 L2.6 8.7 L4.9 8.7 L5.6 7.7 L5.6 3.7 L8.5 0.6 L11.7 0.6 L15.4 4.4 L15.4 7.3 L12.4 10.3 L9.9 10.3 L4.5 15.4 L0.5 15.4 Z" fill="#fbefb4" stroke="#e8b366" stroke-width="0.95" stroke-linejoin="miter"/><path d="M1.6 14.2 L10.5 6.4 L13.6 6.6 L10.8 9.4 L9 9.4 L3.8 14.4 Z" fill="#f2d23e"/><path d="M6.6 4.6 L8.9 2 L10.2 2.2 L7.6 5.8 Z" fill="#fffbe6" opacity="0.8"/><path d="M10.2 3.4 L11.9 4.9" stroke="#e8b868" stroke-width="1.1" stroke-linecap="round"/></svg>
<span class="txt" style="left:73px;letter-spacing:1.4px">id</span>
<span class="txt" style="left:195px;letter-spacing:0.6px">integer</span>
<span class="act" style="left:316px"><svg class="pen" width="28" height="28" viewBox="0 0 28 28"><g transform="translate(1.6 22.2) rotate(-41)"><path d="M7 -3.7 L23 -3.7 L23 3.7 L7 3.7 Z" fill="#f4e08a" stroke="#d89a50" stroke-width="1.2"/><path d="M8 -0.9 L22 -0.9 L22 1.2 L8 1.2 Z" fill="#f7e060"/><path d="M23 -3.7 L26.3 -3.7 Q29 -3.7 29 0 Q29 3.7 26.3 3.7 L23 3.7 Z" fill="#fdeee6" stroke="#d89a50" stroke-width="1.2"/><path d="M7 -3.7 L0.4 -1 L0.4 1 L7 3.7 Z" fill="#f6d2a8" stroke="#c88a48" stroke-width="1.1" stroke-linejoin="round"/></g></svg><svg class="ud" width="16" height="26" viewBox="0 0 16 26"><path d="M8 2.4 L14.2 10 L1.8 10 Z" fill="#c9c9c9" stroke="#c9c9c9" stroke-width="1.6" stroke-linejoin="round"/><path d="M1.8 16 L14.2 16 L8 24 Z" fill="#c9c9c9" stroke="#c9c9c9" stroke-width="1.6" stroke-linejoin="round"/></svg></span>
</div>
<div class="hl" style="top:90px"></div>
<div class="row" style="top:92px">
<span class="txt" style="left:73px;letter-spacing:0.53px">site_id</span>
<span class="txt" style="left:195px;letter-spacing:0.6px">integer</span>
<span class="act" style="left:316px"><svg class="pen" width="28" height="28" viewBox="0 0 28 28"><g transform="translate(1.6 22.2) rotate(-41)"><path d="M7 -3.7 L23 -3.7 L23 3.7 L7 3.7 Z" fill="#f4e08a" stroke="#d89a50" stroke-width="1.2"/><path d="M8 -0.9 L22 -0.9 L22 1.2 L8 1.2 Z" fill="#f7e060"/><path d="M23 -3.7 L26.3 -3.7 Q29 -3.7 29 0 Q29 3.7 26.3 3.7 L23 3.7 Z" fill="#fdeee6" stroke="#d89a50" stroke-width="1.2"/><path d="M7 -3.7 L0.4 -1 L0.4 1 L7 3.7 Z" fill="#f6d2a8" stroke="#c88a48" stroke-width="1.1" stroke-linejoin="round"/></g></svg><svg class="ud" width="16" height="26" viewBox="0 0 16 26"><path d="M8 2.4 L14.2 10 L1.8 10 Z" fill="#c9c9c9" stroke="#c9c9c9" stroke-width="1.6" stroke-linejoin="round"/><path d="M1.8 16 L14.2 16 L8 24 Z" fill="#c9c9c9" stroke="#c9c9c9" stroke-width="1.6" stroke-linejoin="round"/></svg></span>
</div>
<div class="hl" style="top:136px"></div>
<div class="row" style="top:138px">
<span class="txt" style="left:73px;letter-spacing:0.7px">details</span>
<span class="txt" style="left:195px;letter-spacing:1.13px">text</span>
<span class="act" style="left:316px"><svg class="pen" width="28" height="28" viewBox="0 0 28 28"><g transform="translate(1.6 22.2) rotate(-41)"><path d="M7 -3.7 L23 -3.7 L23 3.7 L7 3.7 Z" fill="#f4e08a" stroke="#d89a50" stroke-width="1.2"/><path d="M8 -0.9 L22 -0.9 L22 1.2 L8 1.2 Z" fill="#f7e060"/><path d="M23 -3.7 L26.3 -3.7 Q29 -3.7 29 0 Q29 3.7 26.3 3.7 L23 3.7 Z" fill="#fdeee6" stroke="#d89a50" stroke-width="1.2"/><path d="M7 -3.7 L0.4 -1 L0.4 1 L7 3.7 Z" fill="#f6d2a8" stroke="#c88a48" stroke-width="1.1" stroke-linejoin="round"/></g></svg><svg class="ud" width="16" height="26" viewBox="0 0 16 26"><path d="M8 2.4 L14.2 10 L1.8 10 Z" fill="#c9c9c9" stroke="#c9c9c9" stroke-width="1.6" stroke-linejoin="round"/><path d="M1.8 16 L14.2 16 L8 24 Z" fill="#c9c9c9" stroke="#c9c9c9" stroke-width="1.6" stroke-linejoin="round"/></svg></span>
</div>
<div class="hl" style="top:182px"></div>
<div class="vl" style="left:65px;top:46px;height:138px"></div>
<div class="vl" style="left:187px;top:46px;height:138px"></div>
<div class="vl" style="left:314px;top:46px;height:138px"></div>
<div class="ft" style="top:184px"><svg class="add" width="36" height="36" viewBox="0 0 36 36"><rect x="5.1" y="4.7" width="25.9" height="25.7" rx="2.5" fill="#eaf2fc" stroke="#8db2e4" stroke-width="2"/><rect x="8.1" y="7.7" width="20" height="2" rx="1" fill="#9fd29e"/><rect x="8.1" y="11.8" width="20" height="16.3" fill="#c8dbf3"/><g fill="#eef5fd"><rect x="9.5" y="13.6" width="2.2" height="2.2"/><rect x="9.5" y="17.6" width="2.2" height="2.2"/><rect x="9.5" y="21.6" width="2.2" height="2.2"/><rect x="9.5" y="25.6" width="2.2" height="2.2"/><rect x="14" y="13.6" width="5" height="2.2"/><rect x="22" y="13.6" width="5" height="2.2"/></g><defs><linearGradient id="ag" x1="0" y1="0" x2="1" y2="0"><stop offset="0" stop-color="#c4e6bc"/><stop offset="1" stop-color="#6cc070"/></linearGradient></defs><rect x="21.1" y="18.2" width="11.9" height="8.6" fill="url(#ag)" stroke="#2ea843" stroke-width="2"/><path d="M12.1 22.7 L18 17.2 L18 21.4 L22 21.4 L22 24.1 L18 24.1 L18 28.2 Z" fill="#4a9a42"/></svg><span class="link">Add field</span></div>
</div>
<div class="tbl" style="left:1035px;top:727px;width:400px;height:187px">
<div class="hd"><span class="title" style="letter-spacing:0.43px">audits_reports</span><svg class="edit" width="36" height="38" viewBox="0 0 36 38"><rect x="5.2" y="5.1" width="26.4" height="25.7" rx="2.5" fill="#eaf2fc" stroke="#8db2e4" stroke-width="2"/><rect x="8.3" y="8.2" width="20.4" height="2" rx="1" fill="#96cd94"/><rect x="8.3" y="13" width="20.4" height="15" fill="#c8dbf3"/><g fill="#eef5fd"><rect x="10" y="15" width="2" height="2"/><rect x="10" y="19" width="2" height="2"/><rect x="10" y="23" width="2" height="2"/><rect x="14" y="15" width="6" height="2"/><rect x="14" y="19" width="6" height="2"/><rect x="22" y="15" width="5" height="2"/></g><g transform="translate(10.6 33.4) rotate(-41)"><path d="M6.5 -4.5 L22.5 -4.5 L22.5 4.5 L6.5 4.5 Z" fill="#f0d650" stroke="#c98438" stroke-width="1.3"/><path d="M7.5 -2.8 L22 -2.8 L22 -0.8 L7.5 -0.8 Z" fill="#f8ec9c"/><path d="M22.5 -4.5 L25.5 -4.5 Q29 -4.5 29 0 Q29 4.5 25.5 4.5 L22.5 4.5 Z" fill="#f6d4b4" stroke="#c98438" stroke-width="1.3"/><path d="M6.5 -4.5 L0.3 -1.2 L0.3 1.2 L6.5 4.5 Z" fill="#ecbe8c" stroke="#9a6428" stroke-width="1.1" stroke-linejoin="round"/><path d="M0.3 -1.2 L2.3 -2.2 L2.3 2.2 L0.3 1.2 Z" fill="#4a3010"/></g></svg></div>
<div class="row" style="top:46px">
<span class="txt" style="left:21px;letter-spacing:0.83px">audit_id</span>
<span class="txt" style="left:191px;letter-spacing:0.6px">integer</span>
<span class="act" style="left:316px"><svg class="pen" width="28" height="28" viewBox="0 0 28 28"><g transform="translate(1.6 22.2) rotate(-41)"><path d="M7 -3.7 L23 -3.7 L23 3.7 L7 3.7 Z" fill="#f4e08a" stroke="#d89a50" stroke-width="1.2"/><path d="M8 -0.9 L22 -0.9 L22 1.2 L8 1.2 Z" fill="#f7e060"/><path d="M23 -3.7 L26.3 -3.7 Q29 -3.7 29 0 Q29 3.7 26.3 3.7 L23 3.7 Z" fill="#fdeee6" stroke="#d89a50" stroke-width="1.2"/><path d="M7 -3.7 L0.4 -1 L0.4 1 L7 3.7 Z" fill="#f6d2a8" stroke="#c88a48" stroke-width="1.1" stroke-linejoin="round"/></g></svg><svg class="ud" width="16" height="26" viewBox="0 0 16 26"><path d="M8 2.4 L14.2 10 L1.8 10 Z" fill="#c9c9c9" stroke="#c9c9c9" stroke-width="1.6" stroke-linejoin="round"/><path d="M1.8 16 L14.2 16 L8 24 Z" fill="#c9c9c9" stroke="#c9c9c9" stroke-width="1.6" stroke-linejoin="round"/></svg></span>
</div>
<div class="hl" style="top:90px"></div>
<div class="row" style="top:92px">
<span class="txt" style="left:21px;letter-spacing:0.74px">report_id</span>
<span class="txt" style="left:191px;letter-spacing:0.6px">integer</span>
<span class="act" style="left:316px"><svg class="pen" width="28" height="28" viewBox="0 0 28 28"><g transform="translate(1.6 22.2) rotate(-41)"><path d="M7 -3.7 L23 -3.7 L23 3.7 L7 3.7 Z" fill="#f4e08a" stroke="#d89a50" stroke-width="1.2"/><path d="M8 -0.9 L22 -0.9 L22 1.2 L8 1.2 Z" fill="#f7e060"/><path d="M23 -3.7 L26.3 -3.7 Q29 -3.7 29 0 Q29 3.7 26.3 3.7 L23 3.7 Z" fill="#fdeee6" stroke="#d89a50" stroke-width="1.2"/><path d="M7 -3.7 L0.4 -1 L0.4 1 L7 3.7 Z" fill="#f6d2a8" stroke="#c88a48" stroke-width="1.1" stroke-linejoin="round"/></g></svg><svg class="ud" width="16" height="26" viewBox="0 0 16 26"><path d="M8 2.4 L14.2 10 L1.8 10 Z" fill="#c9c9c9" stroke="#c9c9c9" stroke-width="1.6" stroke-linejoin="round"/><path d="M1.8 16 L14.2 16 L8 24 Z" fill="#c9c9c9" stroke="#c9c9c9" stroke-width="1.6" stroke-linejoin="round"/></svg></span>
</div>
<div class="hl" style="top:136px"></div>
<div class="vl" style="left:13px;top:46px;height:92px"></div>
<div class="vl" style="left:183px;top:46px;height:92px"></div>
<div class="vl" style="left:314px;top:46px;height:92px"></div>
<div class="ft" style="top:138px"><svg class="add" width="36" height="36" viewBox="0 0 36 36"><rect x="5.1" y="4.7" width="25.9" height="25.7" rx="2.5" fill="#eaf2fc" stroke="#8db2e4" stroke-width="2"/><rect x="8.1" y="7.7" width="20" height="2" rx="1" fill="#9fd29e"/><rect x="8.1" y="11.8" width="20" height="16.3" fill="#c8dbf3"/><g fill="#eef5fd"><rect x="9.5" y="13.6" width="2.2" height="2.2"/><rect x="9.5" y="17.6" width="2.2" height="2.2"/><rect x="9.5" y="21.6" width="2.2" height="2.2"/><rect x="9.5" y="25.6" width="2.2" height="2.2"/><rect x="14" y="13.6" width="5" height="2.2"/><rect x="22" y="13.6" width="5" height="2.2"/></g><defs><linearGradient id="ag" x1="0" y1="0" x2="1" y2="0"><stop offset="0" stop-color="#c4e6bc"/><stop offset="1" stop-color="#6cc070"/></linearGradient></defs><rect x="21.1" y="18.2" width="11.9" height="8.6" fill="url(#ag)" stroke="#2ea843" stroke-width="2"/><path d="M12.1 22.7 L18 17.2 L18 21.4 L22 21.4 L22 24.1 L18 24.1 L18 28.2 Z" fill="#4a9a42"/></svg><span class="link">Add field</span></div>
</div>
<div class="tbl" style="left:1715px;top:719px;width:439px;height:279px">
<div class="hd"><span class="title" style="letter-spacing:0.62px">reports</span><svg class="edit" width="36" height="38" viewBox="0 0 36 38"><rect x="5.2" y="5.1" width="26.4" height="25.7" rx="2.5" fill="#eaf2fc" stroke="#8db2e4" stroke-width="2"/><rect x="8.3" y="8.2" width="20.4" height="2" rx="1" fill="#96cd94"/><rect x="8.3" y="13" width="20.4" height="15" fill="#c8dbf3"/><g fill="#eef5fd"><rect x="10" y="15" width="2" height="2"/><rect x="10" y="19" width="2" height="2"/><rect x="10" y="23" width="2" height="2"/><rect x="14" y="15" width="6" height="2"/><rect x="14" y="19" width="6" height="2"/><rect x="22" y="15" width="5" height="2"/></g><g transform="translate(10.6 33.4) rotate(-41)"><path d="M6.5 -4.5 L22.5 -4.5 L22.5 4.5 L6.5 4.5 Z" fill="#f0d650" stroke="#c98438" stroke-width="1.3"/><path d="M7.5 -2.8 L22 -2.8 L22 -0.8 L7.5 -0.8 Z" fill="#f8ec9c"/><path d="M22.5 -4.5 L25.5 -4.5 Q29 -4.5 29 0 Q29 4.5 25.5 4.5 L22.5 4.5 Z" fill="#f6d4b4" stroke="#c98438" stroke-width="1.3"/><path d="M6.5 -4.5 L0.3 -1.2 L0.3 1.2 L6.5 4.5 Z" fill="#ecbe8c" stroke="#9a6428" stroke-width="1.1" stroke-linejoin="round"/><path d="M0.3 -1.2 L2.3 -2.2 L2.3 2.2 L0.3 1.2 Z" fill="#4a3010"/></g></svg></div>
<div class="row" style="top:46px">
<svg class="key" width="32" height="32" viewBox="0 0 16 16"><path d="M0.5 10.7 L2.6 10.7 L2.6 8.7 L4.9 8.7 L5.6 7.7 L5.6 3.7 L8.5 0.6 L11.7 0.6 L15.4 4.4 L15.4 7.3 L12.4 10.3 L9.9 10.3 L4.5 15.4 L0.5 15.4 Z" fill="#fbefb4" stroke="#e8b366" stroke-width="0.95" stroke-linejoin="miter"/><path d="M1.6 14.2 L10.5 6.4 L13.6 6.6 L10.8 9.4 L9 9.4 L3.8 14.4 Z" fill="#f2d23e"/><path d="M6.6 4.6 L8.9 2 L10.2 2.2 L7.6 5.8 Z" fill="#fffbe6" opacity="0.8"/><path d="M10.2 3.4 L11.9 4.9" stroke="#e8b868" stroke-width="1.1" stroke-linecap="round"/></svg>
<span class="txt" style="left:52px;letter-spacing:1.4px">id</span>
<span class="txt" style="left:274px;letter-spacing:0.6px">integer</span>
<span class="act" style="left:355px"><svg class="pen" width="28" height="28" viewBox="0 0 28 28"><g transform="translate(1.6 22.2) rotate(-41)"><path d="M7 -3.7 L23 -3.7 L23 3.7 L7 3.7 Z" fill="#f4e08a" stroke="#d89a50" stroke-width="1.2"/><path d="M8 -0.9 L22 -0.9 L22 1.2 L8 1.2 Z" fill="#f7e060"/><path d="M23 -3.7 L26.3 -3.7 Q29 -3.7 29 0 Q29 3.7 26.3 3.7 L23 3.7 Z" fill="#fdeee6" stroke="#d89a50" stroke-width="1.2"/><path d="M7 -3.7 L0.4 -1 L0.4 1 L7 3.7 Z" fill="#f6d2a8" stroke="#c88a48" stroke-width="1.1" stroke-linejoin="round"/></g></svg><svg class="ud" width="16" height="26" viewBox="0 0 16 26"><path d="M8 2.4 L14.2 10 L1.8 10 Z" fill="#c9c9c9" stroke="#c9c9c9" stroke-width="1.6" stroke-linejoin="round"/><path d="M1.8 16 L14.2 16 L8 24 Z" fill="#c9c9c9" stroke="#c9c9c9" stroke-width="1.6" stroke-linejoin="round"/></svg></span>
</div>
<div class="hl" style="top:90px"></div>
<div class="row" style="top:92px">
<span class="txt" style="left:52px;letter-spacing:0.17px">performance_score</span>
<span class="txt" style="left:274px;letter-spacing:0.6px">integer</span>
<span class="act" style="left:355px"><svg class="pen" width="28" height="28" viewBox="0 0 28 28"><g transform="translate(1.6 22.2) rotate(-41)"><path d="M7 -3.7 L23 -3.7 L23 3.7 L7 3.7 Z" fill="#f4e08a" stroke="#d89a50" stroke-width="1.2"/><path d="M8 -0.9 L22 -0.9 L22 1.2 L8 1.2 Z" fill="#f7e060"/><path d="M23 -3.7 L26.3 -3.7 Q29 -3.7 29 0 Q29 3.7 26.3 3.7 L23 3.7 Z" fill="#fdeee6" stroke="#d89a50" stroke-width="1.2"/><path d="M7 -3.7 L0.4 -1 L0.4 1 L7 3.7 Z" fill="#f6d2a8" stroke="#c88a48" stroke-width="1.1" stroke-linejoin="round"/></g></svg><svg class="ud" width="16" height="26" viewBox="0 0 16 26"><path d="M8 2.4 L14.2 10 L1.8 10 Z" fill="#c9c9c9" stroke="#c9c9c9" stroke-width="1.6" stroke-linejoin="round"/><path d="M1.8 16 L14.2 16 L8 24 Z" fill="#c9c9c9" stroke="#c9c9c9" stroke-width="1.6" stroke-linejoin="round"/></svg></span>
</div>
<div class="hl" style="top:136px"></div>
<div class="row" style="top:138px">
<span class="txt" style="left:52px;letter-spacing:0.03px">overall_score</span>
<span class="txt" style="left:274px;letter-spacing:0.6px">integer</span>
<span class="act" style="left:355px"><svg class="pen" width="28" height="28" viewBox="0 0 28 28"><g transform="translate(1.6 22.2) rotate(-41)"><path d="M7 -3.7 L23 -3.7 L23 3.7 L7 3.7 Z" fill="#f4e08a" stroke="#d89a50" stroke-width="1.2"/><path d="M8 -0.9 L22 -0.9 L22 1.2 L8 1.2 Z" fill="#f7e060"/><path d="M23 -3.7 L26.3 -3.7 Q29 -3.7 29 0 Q29 3.7 26.3 3.7 L23 3.7 Z" fill="#fdeee6" stroke="#d89a50" stroke-width="1.2"/><path d="M7 -3.7 L0.4 -1 L0.4 1 L7 3.7 Z" fill="#f6d2a8" stroke="#c88a48" stroke-width="1.1" stroke-linejoin="round"/></g></svg><svg class="ud" width="16" height="26" viewBox="0 0 16 26"><path d="M8 2.4 L14.2 10 L1.8 10 Z" fill="#c9c9c9" stroke="#c9c9c9" stroke-width="1.6" stroke-linejoin="round"/><path d="M1.8 16 L14.2 16 L8 24 Z" fill="#c9c9c9" stroke="#c9c9c9" stroke-width="1.6" stroke-linejoin="round"/></svg></span>
</div>
<div class="hl" style="top:182px"></div>
<div class="row" style="top:184px">
<span class="txt" style="left:52px;letter-spacing:-0.34px">seo_score</span>
<span class="txt" style="left:274px;letter-spacing:0.6px">integer</span>
<span class="act" style="left:355px"><svg class="pen" width="28" height="28" viewBox="0 0 28 28"><g transform="translate(1.6 22.2) rotate(-41)"><path d="M7 -3.7 L23 -3.7 L23 3.7 L7 3.7 Z" fill="#f4e08a" stroke="#d89a50" stroke-width="1.2"/><path d="M8 -0.9 L22 -0.9 L22 1.2 L8 1.2 Z" fill="#f7e060"/><path d="M23 -3.7 L26.3 -3.7 Q29 -3.7 29 0 Q29 3.7 26.3 3.7 L23 3.7 Z" fill="#fdeee6" stroke="#d89a50" stroke-width="1.2"/><path d="M7 -3.7 L0.4 -1 L0.4 1 L7 3.7 Z" fill="#f6d2a8" stroke="#c88a48" stroke-width="1.1" stroke-linejoin="round"/></g></svg><svg class="ud" width="16" height="26" viewBox="0 0 16 26"><path d="M8 2.4 L14.2 10 L1.8 10 Z" fill="#c9c9c9" stroke="#c9c9c9" stroke-width="1.6" stroke-linejoin="round"/><path d="M1.8 16 L14.2 16 L8 24 Z" fill="#c9c9c9" stroke="#c9c9c9" stroke-width="1.6" stroke-linejoin="round"/></svg></span>
</div>
<div class="hl" style="top:228px"></div>
<div class="vl" style="left:44px;top:46px;height:184px"></div>
<div class="vl" style="left:266px;top:46px;height:184px"></div>
<div class="vl" style="left:353px;top:46px;height:184px"></div>
<div class="ft" style="top:230px"><svg class="add" width="36" height="36" viewBox="0 0 36 36"><rect x="5.1" y="4.7" width="25.9" height="25.7" rx="2.5" fill="#eaf2fc" stroke="#8db2e4" stroke-width="2"/><rect x="8.1" y="7.7" width="20" height="2" rx="1" fill="#9fd29e"/><rect x="8.1" y="11.8" width="20" height="16.3" fill="#c8dbf3"/><g fill="#eef5fd"><rect x="9.5" y="13.6" width="2.2" height="2.2"/><rect x="9.5" y="17.6" width="2.2" height="2.2"/><rect x="9.5" y="21.6" width="2.2" height="2.2"/><rect x="9.5" y="25.6" width="2.2" height="2.2"/><rect x="14" y="13.6" width="5" height="2.2"/><rect x="22" y="13.6" width="5" height="2.2"/></g><defs><linearGradient id="ag" x1="0" y1="0" x2="1" y2="0"><stop offset="0" stop-color="#c4e6bc"/><stop offset="1" stop-color="#6cc070"/></linearGradient></defs><rect x="21.1" y="18.2" width="11.9" height="8.6" fill="url(#ag)" stroke="#2ea843" stroke-width="2"/><path d="M12.1 22.7 L18 17.2 L18 21.4 L22 21.4 L22 24.1 L18 24.1 L18 28.2 Z" fill="#4a9a42"/></svg><span class="link">Add field</span></div>
</div>
</body></html>
